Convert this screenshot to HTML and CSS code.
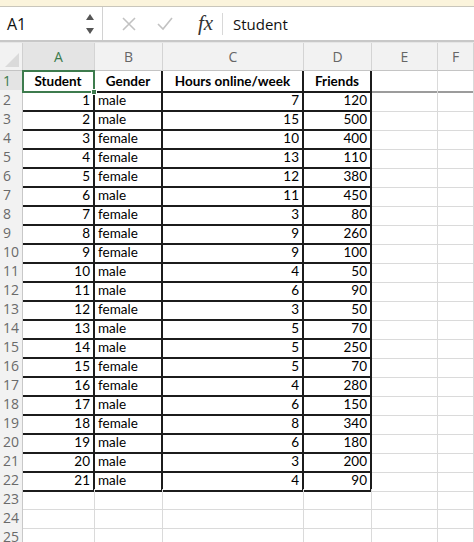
FILE: index.html
```html
<!DOCTYPE html>
<html>
<head>
<meta charset="utf-8">
<link rel="stylesheet" href="styles.css">
</head>
<body>
<div class="strip"></div>
<div class="fbar">
  <div class="namebox">
    <span class="nb-text">A1</span>
    <svg class="spin" width="10" height="22" viewBox="0 0 10 22"><path d="M1 7 L5 1 L9 7 Z" fill="#555"/><path d="M1 15 L5 21 L9 15 Z" fill="#555"/></svg>
  </div>
  <div class="fbtn x"><svg width="16" height="16" viewBox="0 0 16 16"><path d="M2 2 L14 14 M14 2 L2 14" stroke="#c2c2c2" stroke-width="1.6" fill="none"/></svg></div>
  <div class="fbtn ok"><svg width="18" height="16" viewBox="0 0 18 16"><path d="M2 8 L7 13 L16 2" stroke="#c2c2c2" stroke-width="1.6" fill="none"/></svg></div>
  <div class="fx">fx</div>
  <div class="fval">Student</div>
</div>
<div class="sep"></div>
<div class="sheet">
  <div class="row hdr">
    <div class="corner"></div>
    <div class="ch sel">A</div><div class="ch">B</div><div class="ch">C</div><div class="ch">D</div><div class="ch">E</div><div class="ch">F</div>
  </div>
  <div class="row r1">
    <div class="rh sel">1</div>
    <div class="c d b ctr a1">Student<span class="handle"></span></div><div class="c d b ctr">Gender</div><div class="c d b ctr">Hours online/week</div><div class="c d b ctr">Friends</div><div class="c"></div><div class="c"></div>
  </div>
  <div class="row"><div class="rh">2</div><div class="c d n">1</div><div class="c d">male</div><div class="c d n">7</div><div class="c d n">120</div><div class="c"></div><div class="c"></div></div>
  <div class="row"><div class="rh">3</div><div class="c d n">2</div><div class="c d">male</div><div class="c d n">15</div><div class="c d n">500</div><div class="c"></div><div class="c"></div></div>
  <div class="row"><div class="rh">4</div><div class="c d n">3</div><div class="c d">female</div><div class="c d n">10</div><div class="c d n">400</div><div class="c"></div><div class="c"></div></div>
  <div class="row"><div class="rh">5</div><div class="c d n">4</div><div class="c d">female</div><div class="c d n">13</div><div class="c d n">110</div><div class="c"></div><div class="c"></div></div>
  <div class="row"><div class="rh">6</div><div class="c d n">5</div><div class="c d">female</div><div class="c d n">12</div><div class="c d n">380</div><div class="c"></div><div class="c"></div></div>
  <div class="row"><div class="rh">7</div><div class="c d n">6</div><div class="c d">male</div><div class="c d n">11</div><div class="c d n">450</div><div class="c"></div><div class="c"></div></div>
  <div class="row"><div class="rh">8</div><div class="c d n">7</div><div class="c d">female</div><div class="c d n">3</div><div class="c d n">80</div><div class="c"></div><div class="c"></div></div>
  <div class="row"><div class="rh">9</div><div class="c d n">8</div><div class="c d">female</div><div class="c d n">9</div><div class="c d n">260</div><div class="c"></div><div class="c"></div></div>
  <div class="row"><div class="rh">10</div><div class="c d n">9</div><div class="c d">female</div><div class="c d n">9</div><div class="c d n">100</div><div class="c"></div><div class="c"></div></div>
  <div class="row"><div class="rh">11</div><div class="c d n">10</div><div class="c d">male</div><div class="c d n">4</div><div class="c d n">50</div><div class="c"></div><div class="c"></div></div>
  <div class="row"><div class="rh">12</div><div class="c d n">11</div><div class="c d">male</div><div class="c d n">6</div><div class="c d n">90</div><div class="c"></div><div class="c"></div></div>
  <div class="row"><div class="rh">13</div><div class="c d n">12</div><div class="c d">female</div><div class="c d n">3</div><div class="c d n">50</div><div class="c"></div><div class="c"></div></div>
  <div class="row"><div class="rh">14</div><div class="c d n">13</div><div class="c d">male</div><div class="c d n">5</div><div class="c d n">70</div><div class="c"></div><div class="c"></div></div>
  <div class="row"><div class="rh">15</div><div class="c d n">14</div><div class="c d">male</div><div class="c d n">5</div><div class="c d n">250</div><div class="c"></div><div class="c"></div></div>
  <div class="row"><div class="rh">16</div><div class="c d n">15</div><div class="c d">female</div><div class="c d n">5</div><div class="c d n">70</div><div class="c"></div><div class="c"></div></div>
  <div class="row"><div class="rh">17</div><div class="c d n">16</div><div class="c d">female</div><div class="c d n">4</div><div class="c d n">280</div><div class="c"></div><div class="c"></div></div>
  <div class="row"><div class="rh">18</div><div class="c d n">17</div><div class="c d">male</div><div class="c d n">6</div><div class="c d n">150</div><div class="c"></div><div class="c"></div></div>
  <div class="row"><div class="rh">19</div><div class="c d n">18</div><div class="c d">female</div><div class="c d n">8</div><div class="c d n">340</div><div class="c"></div><div class="c"></div></div>
  <div class="row"><div class="rh">20</div><div class="c d n">19</div><div class="c d">male</div><div class="c d n">6</div><div class="c d n">180</div><div class="c"></div><div class="c"></div></div>
  <div class="row"><div class="rh">21</div><div class="c d n">20</div><div class="c d">male</div><div class="c d n">3</div><div class="c d n">200</div><div class="c"></div><div class="c"></div></div>
  <div class="row"><div class="rh">22</div><div class="c d n">21</div><div class="c d">male</div><div class="c d n">4</div><div class="c d n">90</div><div class="c"></div><div class="c"></div></div>
  <div class="row"><div class="rh">23</div><div class="c"></div><div class="c"></div><div class="c"></div><div class="c"></div><div class="c"></div><div class="c"></div></div>
  <div class="row"><div class="rh">24</div><div class="c"></div><div class="c"></div><div class="c"></div><div class="c"></div><div class="c"></div><div class="c"></div></div>
  <div class="row"><div class="rh">25</div><div class="c"></div><div class="c"></div><div class="c"></div><div class="c"></div><div class="c"></div><div class="c"></div></div>
</div>
</body>
</html>
```
FILE: styles.css
```css
* { box-sizing: border-box; }
html, body { margin: 0; padding: 0; background: #fff; overflow: hidden; }
body { width: 474px; height: 542px; font-family: "Open Sans", sans-serif; }

.strip { height: 7px; background: #fbf4dc; border-bottom: 1px solid #c9c6bb; }

.fbar { height: 33px; display: flex; align-items: center; background: #fff; }
.namebox { width: 103px; height: 33px; border-right: 1px solid #d2d2d2; display: flex; align-items: center; justify-content: space-between; padding: 0 7px 0 7px; }
.nb-text { font-size: 16px; color: #111; }
.spin { display: block; }
.fbtn { width: 36px; display: flex; justify-content: center; align-items: center; }
.fbtn.x { margin-left: 8px; }
.fx { font-family: "Liberation Serif", serif; font-style: italic; font-size: 21px; color: #333; width: 40px; text-align: center; border-right: 1px solid #d8d8d8; height: 22px; line-height: 20px; padding-left: 6px; }
.fval { font-size: 15px; color: #111; padding-left: 10px; }

.sep { height: 3px; background: #c8c8c8; border-bottom: 1px solid #e6e6e6; }

.row { display: grid; grid-template-columns: 23px 72px 68px 141px 68px 66px 1fr; height: 19px; }
.row.hdr { height: 28px; }

.corner { background: #f2f2f2; border-right: 1px solid #d0d0d0; border-bottom: 1px solid #c4c4c4; position: relative; }
.corner::after { content: ""; position: absolute; right: 3px; bottom: 3px; width: 0; height: 0; border-left: 14px solid transparent; border-bottom: 14px solid #dadada; }
.ch { background: #f2f2f2; border-right: 1px solid #d4d4d4; border-bottom: 1px solid #c4c4c4; font-size: 14px; color: #666; display: flex; align-items: center; justify-content: center; }
.ch.sel { background: #e4e4e4; color: #3b7a4c; border-bottom: 1px solid #6a9a74; }

.rh { background: #f2f2f2; border-right: 1px solid #c8c8c8; border-bottom: 1px solid #dcdcdc; font-size: 14px; color: #6a6a6a; padding-left: 3px; line-height: 20px; }
.rh.sel { background: #e4e4e4; color: #3b7a4c; }

.c { border-right: 1px solid #dadada; border-bottom: 1px solid #dadada; font-family: "Lato", sans-serif; font-size: 13.5px; color: #000; line-height: 20px; padding: 0 3px; white-space: nowrap; overflow: visible; }
.c.d { border-right: 2px solid #1c1c1c; border-bottom: 2px solid #1c1c1c; }
.c.n { text-align: right; }
.c.b { font-weight: 700; }
.c.ctr { text-align: center; }

.r1 .c { border-bottom: 2px solid #9c9c9c; }
.r1 .c.d { border-bottom: 2px solid #1c1c1c; }
.r1 .rh { border-bottom: 2px solid #9c9c9c; }

.a1 { position: relative; }
.a1::after { content: ""; position: absolute; left: -1px; top: -1px; right: -2px; bottom: -2px; border: 2px solid #3d7b4d; }
.handle { position: absolute; right: -4px; bottom: -4px; width: 6px; height: 6px; background: #3d7b4d; border: 1px solid #fff; z-index: 2; }
```
